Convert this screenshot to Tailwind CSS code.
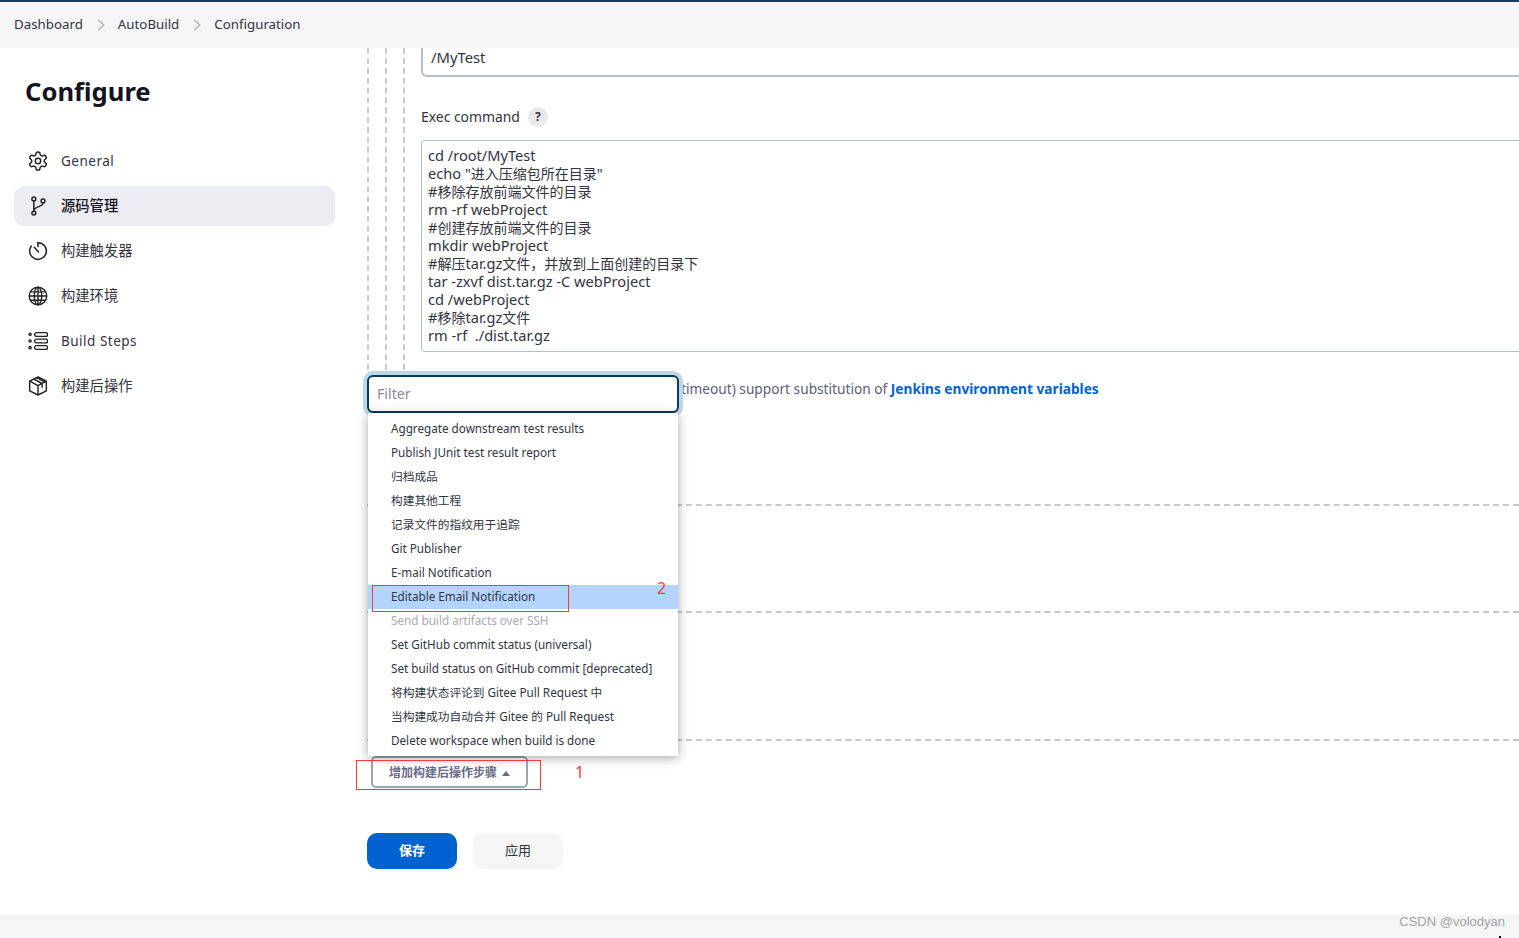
<!DOCTYPE html>
<html lang="zh">
<head>
    <meta charset="UTF-8">
    <title>Configuration - AutoBuild</title>
    <script src="https://cdn.jsdelivr.net/npm/@tailwindcss/browser@4"></script>
</head>
<body class="bg-white text-[#14141f] font-['Noto_Sans','Noto_Sans_CJK_SC',sans-serif] overflow-hidden">
<div class="relative h-[938px] w-[1519px] overflow-hidden flex flex-col">

    <!-- Breadcrumb -->
    <header class="h-[48px] shrink-0 border-t-2 border-[#1c3a5e] bg-[#f5f5f7] flex items-center pl-[14px] text-[13.3px] text-[#33333f]">
        <span>Dashboard</span>
        <svg class="w-[10px] h-[12px] ml-[13px] mr-[12px]" viewBox="0 0 10 12" fill="none" stroke="#a8a8b4" stroke-width="1.2"><path d="M2 1l6 5-6 5"/></svg>
        <span>AutoBuild</span>
        <svg class="w-[10px] h-[12px] ml-[13px] mr-[12px]" viewBox="0 0 10 12" fill="none" stroke="#a8a8b4" stroke-width="1.2"><path d="M2 1l6 5-6 5"/></svg>
        <span>Configuration</span>
    </header>

    <div class="flex flex-1 min-h-0">
        <!-- Sidebar -->
        <aside class="w-[367px] shrink-0 pl-[14px]">
            <h1 class="pl-[11px] mt-[24px] mb-[29px] text-[25.6px] leading-[40px] font-bold">Configure</h1>
            <nav class="w-[321px] flex flex-col gap-[5px] text-[14.3px] text-[#33333f]">
                <a class="h-[40px] flex items-center gap-[13px] pl-[14px] text-[13.5px] tracking-[0.5px]">
                    <svg class="w-[20px] h-[20px]" viewBox="1 1 22 22" fill="none" stroke="#222" stroke-width="1.6" stroke-linejoin="round"><path d="M12.22 2h-.44a2 2 0 0 0-2 2v.18a2 2 0 0 1-1 1.73l-.43.25a2 2 0 0 1-2 0l-.15-.08a2 2 0 0 0-2.73.73l-.22.38a2 2 0 0 0 .73 2.73l.15.1a2 2 0 0 1 1 1.72v.51a2 2 0 0 1-1 1.74l-.15.09a2 2 0 0 0-.73 2.73l.22.38a2 2 0 0 0 2.73.73l.15-.08a2 2 0 0 1 2 0l.43.25a2 2 0 0 1 1 1.73V20a2 2 0 0 0 2 2h.44a2 2 0 0 0 2-2v-.18a2 2 0 0 1 1-1.73l.43-.25a2 2 0 0 1 2 0l.15.08a2 2 0 0 0 2.73-.73l.22-.39a2 2 0 0 0-.73-2.73l-.15-.08a2 2 0 0 1-1-1.74v-.5a2 2 0 0 1 1-1.74l.15-.09a2 2 0 0 0 .73-2.73l-.22-.38a2 2 0 0 0-2.73-.73l-.15.08a2 2 0 0 1-2 0l-.43-.25a2 2 0 0 1-1-1.73V4a2 2 0 0 0-2-2z"/><circle cx="12" cy="12" r="3"/></svg>
                    <span>General</span>
                </a>
                <a class="h-[40px] flex items-center gap-[13px] pl-[14px] pb-[1px] rounded-[10px] bg-[#ecedf2] font-medium text-[#14141f]">
                    <svg class="w-[20px] h-[20px]" viewBox="0 0 24 24" fill="none" stroke="#222" stroke-width="1.8"><circle cx="7" cy="3.5" r="2.3"/><circle cx="7" cy="20.5" r="2.3"/><circle cx="18" cy="6" r="2.3"/><path d="M7 6v12M18 8.5c0 5-11 3.5-11 9.5"/></svg>
                    <span>源码管理</span>
                </a>
                <a class="h-[40px] flex items-center gap-[13px] pl-[14px] pb-[1px]">
                    <svg class="w-[20px] h-[20px]" viewBox="0 0 24 24" fill="none" stroke="#222" stroke-width="1.8" stroke-linecap="round"><path d="M12 2a10 10 0 1 1-8 4"/><path d="M12 2v4.5M7.5 7.5l5 5.5"/></svg>
                    <span>构建触发器</span>
                </a>
                <a class="h-[40px] flex items-center gap-[13px] pl-[14px] pb-[1px]">
                    <svg class="w-[20px] h-[20px]" viewBox="0 0 24 24" fill="none" stroke="#222" stroke-width="1.7"><circle cx="12" cy="12" r="10.5"/><ellipse cx="12" cy="12" rx="4.5" ry="10.5"/><path d="M12 1.5v21M1.5 12h21M3.5 7h17M3.5 17h17"/></svg>
                    <span>构建环境</span>
                </a>
                <a class="h-[40px] flex items-center gap-[13px] pl-[14px] text-[13.5px] tracking-[0.5px]">
                    <svg class="w-[20px] h-[20px]" viewBox="0 0 24 24" fill="none" stroke="#222" stroke-width="1.6"><circle cx="2.5" cy="4" r="1.4"/><circle cx="2.5" cy="12" r="1.4"/><circle cx="2.5" cy="20" r="1.4"/><rect x="8" y="2" width="15.5" height="4.5" rx="2.2"/><rect x="8" y="9.8" width="15.5" height="4.5" rx="2.2"/><rect x="8" y="17.6" width="15.5" height="4.5" rx="2.2"/></svg>
                    <span>Build Steps</span>
                </a>
                <a class="h-[40px] flex items-center gap-[13px] pl-[14px] pb-[1px]">
                    <svg class="w-[20px] h-[20px]" viewBox="0 0 24 24" fill="none" stroke="#222" stroke-width="1.7" stroke-linejoin="round"><path d="M12 1.2l10 5v11.6l-10 5-10-5V6.200z"/><path d="M2 6.200L12 11.500l10-5.300M12 11.500v11.300M7 3.700l10 5.300v5M10.500 2l10 5.200"/></svg>
                    <span>构建后操作</span>
                </a>
            </nav>
        </aside>

        <!-- Main form -->
        <main class="relative flex-1 min-w-0">
            <div class="border-l-2 border-dashed border-[#c3ccd2] pl-[16px] h-[322px]">
                <div class="border-l-2 border-dashed border-[#c3ccd2] pl-[16px] h-full">
                    <div class="border-l-2 border-dashed border-[#c3ccd2] pl-[16px] h-full w-[1200px]">
                        <div class="h-[29px] w-[1150px] border-2 border-t-0 border-[#b4c0c8] rounded-b-[6px] pl-[8px] text-[14.800px] leading-[18px] text-[#33333f]">/MyTest</div>
                        <div class="mt-[28px] flex items-center gap-[8px] text-[13.900px] leading-[24px] text-[#33333f]">
                            <span>Exec command</span>
                            <span class="w-[20px] h-[20px] rounded-full bg-[#e9e9ec] flex items-center justify-center text-[12px] font-bold">?</span>
                        </div>
                        <div class="mt-[11px] h-[212px] w-[1150px] border border-[#b4c0c8] rounded-[3px] pl-[6px] pt-[5px] grid auto-rows-[18px] text-[14.600px] leading-[18px] text-[#33333f]">
                            <div>cd /root/MyTest</div>
                            <div>echo "<span class="text-[14px]">进入压缩包所在目录</span>"</div>
                            <div>#<span class="text-[14px]">移除存放前端文件的目录</span></div>
                            <div>rm -rf webProject</div>
                            <div>#<span class="text-[14px]">创建存放前端文件的目录</span></div>
                            <div>mkdir webProject</div>
                            <div>#<span class="text-[14px]">解压</span>tar.gz<span class="text-[14px]">文件，并放到上面创建的目录下</span></div>
                            <div>tar -zxvf dist.tar.gz -C webProject</div>
                            <div>cd /webProject</div>
                            <div>#<span class="text-[14px]">移除</span>tar.gz<span class="text-[14px]">文件</span></div>
                            <div class="whitespace-pre">rm -rf  ./dist.tar.gz</div>
                        </div>
                    </div>
                </div>
            </div>

            <p class="mt-[9px] ml-[314px] text-[13.700px] leading-[20px] text-[#5c5c78] whitespace-nowrap">timeout) support substitution of <a class="font-bold text-[#0062d1]">Jenkins environment variables</a></p>

            <div class="mt-[105px] border-t-2 border-dashed border-[#c9c9c9]"></div>
            <div class="mt-[105px] border-t-2 border-dashed border-[#c9c9c9]"></div>
            <div class="mt-[126px] border-t-2 border-dashed border-[#c9c9c9]"></div>

            <button class="mt-[15px] ml-[4px] w-[157px] h-[32px] pt-[2px] border-2 border-[#98a6b0] rounded-[5px] flex items-center justify-center gap-[5px] text-[12px] font-semibold text-[#6a6a88]">
                增加构建后操作步骤
                <svg class="w-[8px] h-[5px]" viewBox="0 0 8 5" fill="#6a6a88"><path d="M4 0l4 5H0z"/></svg>
            </button>

            <div class="mt-[45px] flex gap-[16px] text-[13px]">
                <button class="w-[90px] h-[36px] rounded-[10px] bg-[#0062d1] text-white font-bold">保存</button>
                <button class="w-[90px] h-[36px] rounded-[10px] bg-[#f5f5f7] text-[#33333f]">应用</button>
            </div>

            <!-- Filter menu -->
            <div class="absolute left-0 top-[327px] w-[312px] z-10">
                <div class="h-[38px] border-2 border-[#0b3a5e] rounded-[6px] bg-white ring-4 ring-[#bed7e7] flex items-center pl-[8px] pb-[1px] text-[14.200px] text-[#8a8a94]">Filter</div>
                <ul class="ml-[1px] w-[310px] bg-white pt-[4px] pb-[3px] shadow-[0_2px_10px_rgba(0,0,0,0.35)] text-[11.700px] leading-[22px] text-[#33333f]">
                    <li class="pl-[23px] h-[24px]">Aggregate downstream test results</li>
                    <li class="pl-[23px] h-[24px]">Publish JUnit test result report</li>
                    <li class="pl-[23px] h-[24px]">归档成品</li>
                    <li class="pl-[23px] h-[24px]">构建其他工程</li>
                    <li class="pl-[23px] h-[24px]">记录文件的指纹用于追踪</li>
                    <li class="pl-[23px] h-[24px]">Git Publisher</li>
                    <li class="pl-[23px] h-[24px]">E-mail Notification</li>
                    <li class="pl-[23px] h-[24px] bg-[#b3d4ff]">Editable Email Notification</li>
                    <li class="pl-[23px] h-[24px] text-[#a9a9b0]">Send build artifacts over SSH</li>
                    <li class="pl-[23px] h-[24px]">Set GitHub commit status (universal)</li>
                    <li class="pl-[23px] h-[24px]">Set build status on GitHub commit [deprecated]</li>
                    <li class="pl-[23px] h-[24px]">将构建状态评论到 Gitee Pull Request 中</li>
                    <li class="pl-[23px] h-[24px]">当构建成功自动合并 Gitee 的 Pull Request</li>
                    <li class="pl-[23px] h-[24px]">Delete workspace when build is done</li>
                </ul>
            </div>

            <!-- Annotations -->
            <div class="absolute z-20 left-[5px] top-[537px] w-[197px] h-[27px] border border-[#f63a3a]"></div>
            <span class="absolute z-20 left-[290px] top-[529px] text-[16px] leading-[22px] text-[#f63a3a]">2</span>
            <div class="absolute z-20 left-[-11px] top-[712px] w-[185px] h-[30px] border border-[#f63a3a]"></div>
            <span class="absolute z-20 left-[208px] top-[713px] text-[16px] leading-[22px] text-[#f63a3a]">1</span>
        </main>
    </div>

    <footer class="relative h-[23px] shrink-0 bg-[#f5f5f7]">
        <span class="absolute right-[14px] top-[-2px] font-['Liberation_Sans',sans-serif] text-[13px] leading-[18px] text-[#a3a3a3]">CSDN @volodyan</span>
        <span class="absolute left-[1499px] top-[21px] w-[2px] h-[2px] bg-black"></span>
    </footer>
</div>
</body>
</html>
